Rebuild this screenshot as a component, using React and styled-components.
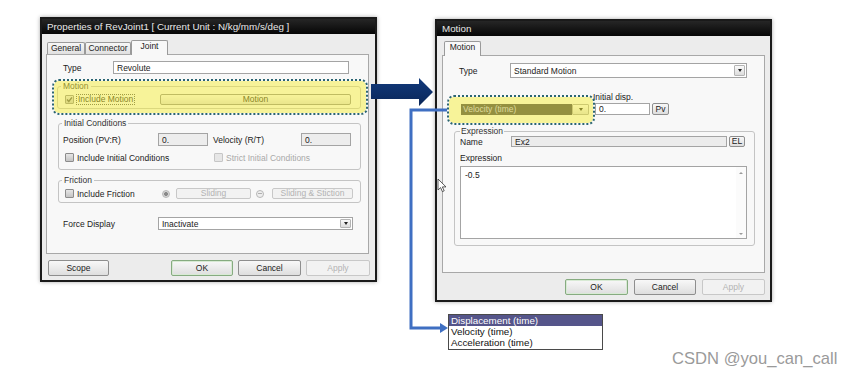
import React from 'react';
import styled, { createGlobalStyle } from 'styled-components';

const Global = createGlobalStyle`
  html, body { margin: 0; padding: 0; background: #fff; }
  body { font-family: "Liberation Sans", Arial, sans-serif; color: #222; }
`;

const Canvas = styled.div`
  position: relative;
  width: 853px;
  height: 376px;
  overflow: hidden;
  background: #fff;
`;

const Window = styled.div`
  position: absolute;
  left: ${(p) => p.$x}px;
  top: ${(p) => p.$y}px;
  width: ${(p) => p.$w}px;
  height: ${(p) => p.$h}px;
  box-sizing: border-box;
  border: 2px solid #1a1a1a;
  background: #ececec;
  display: flex;
  flex-direction: column;
  box-shadow: 0 0 4px rgba(0, 0, 0, 0.35);
`;

const TitleBar = styled.div`
  flex: none;
  height: 15px;
  background: linear-gradient(#262626, #060606);
  color: #e8e8e8;
  font-size: 9.8px;
  line-height: 15px;
  padding-left: 5px;
  white-space: nowrap;
`;

const Body = styled.div`
  flex: 1;
  display: flex;
  flex-direction: column;
  padding: ${(p) => p.$pad};
`;

const Tabs = styled.div`
  display: flex;
  align-items: flex-end;
  height: 14px;
  padding-left: ${(p) => p.$indent}px;
  position: relative;
  z-index: 1;
`;

const Tab = styled.div`
  box-sizing: border-box;
  width: ${(p) => p.$w}px;
  height: ${(p) => (p.$active ? 15 : 12)}px;
  margin-bottom: ${(p) => (p.$active ? -1 : 0)}px;
  border: 1px solid #9a9a9a;
  border-bottom: none;
  border-radius: 2px 2px 0 0;
  background: ${(p) => (p.$active ? '#f8f8f8' : 'linear-gradient(#f7f7f7, #e0e0e0)')};
  font-size: 8.5px;
  line-height: 11px;
  text-align: center;
  color: #222;
  white-space: nowrap;
`;

const Panel = styled.div`
  flex: 1;
  box-sizing: border-box;
  border: 1px solid #a8a8a8;
  background: #f8f8f8;
  display: flex;
  flex-direction: column;
  padding: ${(p) => p.$pad};
`;

const Row = styled.div`
  display: flex;
  align-items: ${(p) => p.$align || 'center'};
  height: ${(p) => (p.$h ? `${p.$h}px` : 'auto')};
  margin: ${(p) => p.$m || '0'};
  padding-left: ${(p) => p.$pl || 0}px;
`;

const Label = styled.span`
  flex: none;
  width: ${(p) => (p.$w ? `${p.$w}px` : 'auto')};
  font-size: 8.5px;
  line-height: 10px;
  color: ${(p) => (p.$disabled ? '#a8a8a8' : '#222')};
  white-space: nowrap;
  margin-left: ${(p) => p.$ml || 0}px;
  margin-top: ${(p) => p.$mt || 0}px;
`;

const TextBox = styled.div`
  flex: none;
  box-sizing: border-box;
  width: ${(p) => p.$w}px;
  height: ${(p) => p.$h || 13}px;
  margin-left: ${(p) => p.$ml || 0}px;
  border: 1px solid #a4a4a4;
  background: ${(p) => p.$bg || '#fff'};
  font-size: 8.5px;
  color: #222;
  padding-left: 3px;
  display: flex;
  align-items: center;
  white-space: nowrap;
`;

const SelectBox = styled(TextBox)`
  justify-content: space-between;
  padding-right: 1px;
`;

const SelectArrow = styled.span`
  flex: none;
  box-sizing: border-box;
  width: 11px;
  height: calc(100% - 2px);
  border: 1px solid #b4b4b4;
  border-radius: 1px;
  background: linear-gradient(#fafafa, #dcdcdc);
  display: flex;
  align-items: center;
  justify-content: center;
  &::before {
    content: '';
    border-left: 2.5px solid transparent;
    border-right: 2.5px solid transparent;
    border-top: 3px solid #222;
  }
`;

const Button = styled.button`
  flex: none;
  box-sizing: border-box;
  width: ${(p) => p.$w}px;
  height: ${(p) => p.$h || 16}px;
  margin: 0 0 0 ${(p) => p.$ml || 0}px;
  padding: 0;
  border: 1px solid ${(p) => (p.$default ? '#86ab80' : p.disabled ? '#c8c8c8' : '#8e8e8e')};
  border-radius: 2px;
  background: ${(p) => (p.disabled ? '#f2f2f2' : 'linear-gradient(#f8f8f8, #dedede)')};
  box-shadow: ${(p) => (p.$default ? 'inset 0 0 0 1px #d8ead4' : 'none')};
  color: ${(p) => (p.disabled ? '#b2b2b2' : '#222')};
  font-family: inherit;
  font-size: 8.5px;
  line-height: 1;
  white-space: nowrap;
`;

const ButtonBar = styled.div`
  flex: none;
  display: flex;
  align-items: center;
  height: 16px;
  margin: 6px ${(p) => p.$mr || 0}px 0 ${(p) => p.$ml || 0}px;
  justify-content: ${(p) => p.$justify || 'flex-start'};
`;

const Spacer = styled.div`
  flex: 1;
`;

const Group = styled.fieldset`
  margin: ${(p) => p.$m || '0'};
  min-width: 0;
  border: 1px solid #c4c4c4;
  border-radius: 3px;
  padding: ${(p) => p.$pad};
  display: flex;
  flex-direction: column;
`;

const Legend = styled.legend`
  padding: 0 ${(p) => (p.$tight ? 1 : 2)}px;
  font-size: 8.5px;
  line-height: 10px;
  color: #333;
`;

const Highlight = styled.div`
  position: relative;
  flex: none;
  box-sizing: border-box;
  border: 2px dotted #2b6572;
  border-radius: 7px;
  margin: ${(p) => p.$m};
  padding: ${(p) => p.$pad};
  width: ${(p) => (p.$w ? `${p.$w}px` : 'auto')};
  height: ${(p) => (p.$h ? `${p.$h}px` : 'auto')};
  display: flex;
  flex-direction: column;
  &::after {
    content: '';
    position: absolute;
    inset: 0;
    border-radius: 5px;
    background: rgba(246, 238, 50, 0.48);
    pointer-events: none;
  }
`;

const CheckCell = styled.span`
  flex: none;
  width: ${(p) => (p.$w ? `${p.$w}px` : 'auto')};
  display: flex;
  align-items: center;
  gap: 2px;
`;

const CheckBox = styled.span`
  flex: none;
  box-sizing: border-box;
  width: 9px;
  height: 9px;
  border: 1px solid ${(p) => (p.$disabled ? '#c6c6c6' : '#8c8c8c')};
  border-radius: 1px;
  background: ${(p) => (p.$disabled ? '#e6e6e6' : 'linear-gradient(#e6e6e6, #c4c4c4)')};
  display: flex;
  align-items: center;
  justify-content: center;
  margin-right: 1px;
`;

const FocusText = styled.span`
  font-size: 8.5px;
  line-height: 9px;
  color: #222;
  outline: 1px dotted #555;
  outline-offset: 0;
  padding: 0 1px;
`;

const Radio = styled.span`
  flex: none;
  box-sizing: border-box;
  width: 8px;
  height: 8px;
  border-radius: 50%;
  border: 1px solid #b8b8b8;
  background: ${(p) => (p.$on ? 'radial-gradient(circle, #8a8a8a 0 1.8px, #d6d6d6 2.2px)' : '#eeeeee')};
  margin-left: ${(p) => p.$ml || 0}px;
  display: flex;
  align-items: center;
  justify-content: center;
  &::before {
    content: '';
    display: ${(p) => (p.$on ? 'none' : 'block')};
    width: 4px;
    height: 1px;
    background: #b0b0b0;
  }
`;

const VelocitySelect = styled.div`
  display: flex;
  height: 11px;
  width: 128px;
`;

const VelocityValue = styled.div`
  flex: 1;
  background: #3b3b4e;
  color: #c8c8f2;
  font-size: 8.5px;
  line-height: 11px;
  padding-left: 2px;
  white-space: nowrap;
`;

const VelocityArrow = styled(SelectArrow)`
  width: 17px;
  height: 11px;
  border-color: #a8a8a8;
`;

const InitCol = styled.div`
  display: flex;
  flex-direction: column;
  margin-left: -2px;
`;

const TextArea = styled.div`
  box-sizing: border-box;
  width: ${(p) => p.$w}px;
  height: ${(p) => p.$h}px;
  margin-top: 3px;
  border: 1px solid #a4a4a4;
  background: #fff;
  display: flex;
`;

const TextAreaContent = styled.div`
  flex: 1;
  font-size: 8.5px;
  padding: 3px 4px;
  color: #222;
`;

const ScrollBar = styled.div`
  width: 10px;
  display: flex;
  flex-direction: column;
  justify-content: space-between;
  align-items: center;
  padding: 5px 0 3px;
  background: #fbfbfb;
`;

const ScrollArrow = styled.span`
  border-left: 2px solid transparent;
  border-right: 2px solid transparent;
  ${(p) => (p.$up ? 'border-bottom: 2.5px solid #9a9a9a;' : 'border-top: 2.5px solid #9a9a9a;')}
`;

const ListBox = styled.div`
  position: absolute;
  left: 448px;
  top: 314px;
  width: 155px;
  box-sizing: border-box;
  border: 1px solid #4a4a4a;
  background: #fff;
  padding-bottom: 1px;
  z-index: 3;
`;

const ListItem = styled.div`
  height: 11px;
  line-height: 11px;
  font-size: 9.8px;
  padding-left: 2px;
  background: ${(p) => (p.$selected ? '#55558a' : 'transparent')};
  color: ${(p) => (p.$selected ? '#fff' : '#111')};
  white-space: nowrap;
`;

const Overlay = styled.svg`
  position: absolute;
  left: 0;
  top: 0;
  pointer-events: none;
  z-index: 2;
`;

const Watermark = styled.div`
  position: absolute;
  left: 672px;
  top: 349px;
  font-family: "Liberation Sans", Arial, sans-serif;
  font-size: 16.6px;
  color: #9a9a9a;
  white-space: nowrap;
`;

const Check = () => (
  <svg width="7" height="7" viewBox="0 0 7 7">
    <path d="M1 3.6 L2.8 5.4 L6 1.4" fill="none" stroke="#555" strokeWidth="1.4" />
  </svg>
);

function JointDialog() {
  return (
    <Window $x={40} $y={17} $w={337} $h={265}>
      <TitleBar>Properties of RevJoint1 [ Current Unit : N/kg/mm/s/deg ]</TitleBar>
      <Body $pad="6px 6px 4px 4px">
        <Tabs $indent={1}>
          <Tab $w={38}>General</Tab>
          <Tab $w={46}>Connector</Tab>
          <Tab $w={37} $active>Joint</Tab>
        </Tabs>
        <Panel $pad="6px 7px 0 10px">
          <Row $h={13} $pl={6}>
            <Label $w={50}>Type</Label>
            <TextBox $w={236}>Revolute</TextBox>
          </Row>

          <Highlight $m="5px -7px 0 -5px" $pad="0 5px 4px 3px">
            <Group $pad="2px 4px 3px 3px">
              <Legend>Motion</Legend>
              <Row $h={12} $pl={4}>
                <CheckCell $w={95}>
                  <CheckBox>
                    <Check />
                  </CheckBox>
                  <FocusText>Include Motion</FocusText>
                </CheckCell>
                <Button $w={191} $h={11}>Motion</Button>
              </Row>
            </Group>
          </Highlight>

          <Group $m="3px 0 0 1px" $pad="5px 3px 6px 3px">
            <Legend>Initial Conditions</Legend>
            <Row $h={13} $pl={1}>
              <Label $w={95}>Position (PV:R)</Label>
              <TextBox $w={50} $bg="#ededed">0.</TextBox>
              <Label $w={88} $ml={5}>Velocity (R/T)</Label>
              <TextBox $w={50} $bg="#ededed">0.</TextBox>
            </Row>
            <Row $h={11} $pl={3} $m="6px 0 0 0">
              <CheckCell $w={149}>
                <CheckBox />
                <Label>Include Initial Conditions</Label>
              </CheckCell>
              <CheckCell>
                <CheckBox $disabled />
                <Label $disabled>Strict Initial Conditions</Label>
              </CheckCell>
            </Row>
          </Group>

          <Group $m="5px 0 0 1px" $pad="3px 3px 3px 3px">
            <Legend>Friction</Legend>
            <Row $h={11} $pl={3}>
              <CheckCell $w={97}>
                <CheckBox />
                <Label>Include Friction</Label>
              </CheckCell>
              <Radio $on />
              <Button $w={75} $h={11} $ml={6} disabled>Sliding</Button>
              <Radio $ml={5} />
              <Button $w={81} $h={11} $ml={8} disabled>Sliding &amp; Stiction</Button>
            </Row>
          </Group>

          <Row $h={13} $pl={6} $m="14px 0 0 0">
            <Label $w={95}>Force Display</Label>
            <SelectBox $w={195}>
              Inactivate
              <SelectArrow />
            </SelectBox>
          </Row>
        </Panel>
        <ButtonBar $ml={2} $mr={-1}>
          <Button $w={61}>Scope</Button>
          <Spacer />
          <Button $w={62} $default>OK</Button>
          <Button $w={63} $ml={5}>Cancel</Button>
          <Button $w={64} $ml={5} disabled>Apply</Button>
        </ButtonBar>
      </Body>
    </Window>
  );
}

function MotionDialog() {
  return (
    <Window $x={435} $y={19} $w={337} $h={283}>
      <TitleBar>Motion</TitleBar>
      <Body $pad="5px 5px 5px 5px">
        <Tabs $indent={2}>
          <Tab $w={37} $active>Motion</Tab>
        </Tabs>
        <Panel $pad="7px 9px 0 11px">
          <Row $h={15} $pl={5}>
            <Label $w={51}>Type</Label>
            <SelectBox $w={237} $h={15}>
              Standard Motion
              <SelectArrow />
            </SelectBox>
          </Row>

          <Row $align="flex-start" $m="14px 0 0 0">
            <Highlight $m="3px 0 0 -7px" $pad="7px 4px 0 12px" $w={148} $h={30}>
              <VelocitySelect>
                <VelocityValue>Velocity (time)</VelocityValue>
                <VelocityArrow />
              </VelocitySelect>
            </Highlight>
            <InitCol>
              <Label>Initial disp.</Label>
              <Row $m="1px 0 0 2px">
                <TextBox $w={55} $h={12}>0.</TextBox>
                <Button $w={17} $h={12} $ml={2}>Pv</Button>
              </Row>
            </InitCol>
          </Row>

          <Group $m="1px 0 0 0" $pad="0 7px 6px 5px">
            <Legend $tight>Expression</Legend>
            <Row $h={11}>
              <Label $w={51}>Name</Label>
              <TextBox $w={216} $h={11} $bg="#ececec">Ex2</TextBox>
              <Button $w={16} $h={11} $ml={2}>EL</Button>
            </Row>
            <Label $mt={6}>Expression</Label>
            <TextArea $w={287} $h={73}>
              <TextAreaContent>-0.5</TextAreaContent>
              <ScrollBar>
                <ScrollArrow $up />
                <ScrollArrow />
              </ScrollBar>
            </TextArea>
          </Group>
        </Panel>
        <ButtonBar $justify="flex-end">
          <Button $w={63} $default>OK</Button>
          <Button $w={62} $ml={6}>Cancel</Button>
          <Button $w={63} $ml={6} disabled>Apply</Button>
        </ButtonBar>
      </Body>
    </Window>
  );
}

export default function App() {
  return (
    <>
      <Global />
      <Canvas>
        <JointDialog />
        <MotionDialog />
        <Overlay width="853" height="376" viewBox="0 0 853 376">
          <defs>
            <linearGradient id="navy" x1="0" y1="0" x2="0" y2="1">
              <stop offset="0" stopColor="#123a7c" />
              <stop offset="1" stopColor="#0a2658" />
            </linearGradient>
          </defs>
          <polygon
            points="371,84 419,84 419,78 433,92 419,106 419,99 371,99"
            fill="url(#navy)"
          />
          <polyline
            points="447,110 411,110 411,328 441,328"
            fill="none"
            stroke="#3f6fc2"
            strokeWidth="3"
          />
          <polygon points="440,323 448,328 440,333" fill="#3f6fc2" />
          <path
            d="M438 179 L438 190 L440.6 187.6 L442.4 191.6 L444.2 190.8 L442.4 186.9 L446 186.9 Z"
            fill="#fff"
            stroke="#333"
            strokeWidth="0.8"
          />
        </Overlay>
        <ListBox>
          <ListItem $selected>Displacement (time)</ListItem>
          <ListItem>Velocity (time)</ListItem>
          <ListItem>Acceleration (time)</ListItem>
        </ListBox>
        <Watermark>CSDN @you_can_call</Watermark>
      </Canvas>
    </>
  );
}
